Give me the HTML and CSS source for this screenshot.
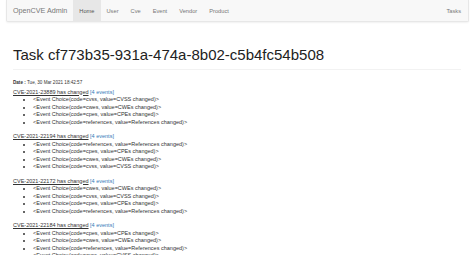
FILE: index.html
```html
<!DOCTYPE html>
<html>
<head>
<meta charset="utf-8">
<title>OpenCVE Admin</title>
<link rel="stylesheet" href="styles.css">
</head>
<body>
<nav class="navbar">
  <a class="brand" href="#">OpenCVE Admin</a>
  <a class="nav-link active" href="#">Home</a>
  <a class="nav-link" href="#">User</a>
  <a class="nav-link" href="#">Cve</a>
  <a class="nav-link" href="#">Event</a>
  <a class="nav-link" href="#">Vendor</a>
  <a class="nav-link" href="#">Product</a>
  <a class="nav-link nav-right" href="#">Tasks</a>
</nav>
<main class="content">
  <h1 class="page-header">Task cf773b35-931a-474a-8b02-c5b4fc54b508</h1>
  <p class="date"><b>Date :</b> Tue, 30 Mar 2021 18:42:57</p>

  <div class="change">
    <div class="cve-line"><a class="cve" href="#">CVE-2021-23889 has changed</a> <a class="events" href="#">[4 events]</a></div>
    <ul class="event-list">
      <li>&lt;Event Choice(code=cvss, value=CVSS changed)&gt;</li>
      <li>&lt;Event Choice(code=cwes, value=CWEs changed)&gt;</li>
      <li>&lt;Event Choice(code=cpes, value=CPEs changed)&gt;</li>
      <li>&lt;Event Choice(code=references, value=References changed)&gt;</li>
    </ul>
  </div>

  <div class="change">
    <div class="cve-line"><a class="cve" href="#">CVE-2021-22194 has changed</a> <a class="events" href="#">[4 events]</a></div>
    <ul class="event-list">
      <li>&lt;Event Choice(code=references, value=References changed)&gt;</li>
      <li>&lt;Event Choice(code=cpes, value=CPEs changed)&gt;</li>
      <li>&lt;Event Choice(code=cwes, value=CWEs changed)&gt;</li>
      <li>&lt;Event Choice(code=cvss, value=CVSS changed)&gt;</li>
    </ul>
  </div>

  <div class="change">
    <div class="cve-line"><a class="cve" href="#">CVE-2021-22172 has changed</a> <a class="events" href="#">[4 events]</a></div>
    <ul class="event-list">
      <li>&lt;Event Choice(code=cwes, value=CWEs changed)&gt;</li>
      <li>&lt;Event Choice(code=cvss, value=CVSS changed)&gt;</li>
      <li>&lt;Event Choice(code=cpes, value=CPEs changed)&gt;</li>
      <li>&lt;Event Choice(code=references, value=References changed)&gt;</li>
    </ul>
  </div>

  <div class="change">
    <div class="cve-line"><a class="cve" href="#">CVE-2021-22184 has changed</a> <a class="events" href="#">[4 events]</a></div>
    <ul class="event-list">
      <li>&lt;Event Choice(code=cpes, value=CPEs changed)&gt;</li>
      <li>&lt;Event Choice(code=cwes, value=CWEs changed)&gt;</li>
      <li>&lt;Event Choice(code=references, value=References changed)&gt;</li>
      <li>&lt;Event Choice(code=cvss, value=CVSS changed)&gt;</li>
    </ul>
  </div>
</main>
</body>
</html>
```

FILE: styles.css
```css
html, body {
  margin: 0;
  padding: 0;
  background: #ffffff;
}

body {
  font-family: "Liberation Sans", Arial, sans-serif;
  color: #333333;
  overflow: hidden;
}

.navbar {
  display: flex;
  align-items: stretch;
  height: 21px;
  margin: 0 5px 0 6px;
  background: #f8f8f8;
  border: 1px solid #e7e7e7;
  border-top: none;
  border-radius: 0 0 2px 2px;
  box-shadow: 0 1px 2px rgba(0, 0, 0, 0.06);
}

.brand {
  display: flex;
  align-items: center;
  padding: 0 6px 0 6px;
  font-size: 7.2px;
  color: #777777;
  text-decoration: none;
}

.nav-link {
  display: flex;
  align-items: center;
  padding: 0 6px;
  font-size: 5.7px;
  color: #777777;
  text-decoration: none;
}

.nav-link.active {
  background: #e7e7e7;
  color: #555555;
}

.nav-right {
  margin-left: auto;
  padding-right: 7px;
}

.content {
  padding: 0 13px;
}

.page-header {
  margin: 25px 0 0;
  padding-bottom: 5px;
  border-bottom: 1px solid #f2f2f2;
  font-size: 15px;
  font-weight: normal;
  line-height: 1.1;
  color: #222222;
}

.date {
  margin: 9px 0 0;
  font-size: 4.6px;
  line-height: 7px;
}

.change {
  margin-top: 3px;
}

.change + .change {
  margin-top: 7px;
}

.cve-line {
  font-size: 5.5px;
  line-height: 7.5px;
}

.cve {
  color: #333333;
  text-decoration: underline;
}

.events {
  color: #337ab7;
  text-decoration: none;
}

.event-list {
  margin: 0;
  padding-left: 20px;
  font-size: 5.5px;
  line-height: 7.5px;
}
```
